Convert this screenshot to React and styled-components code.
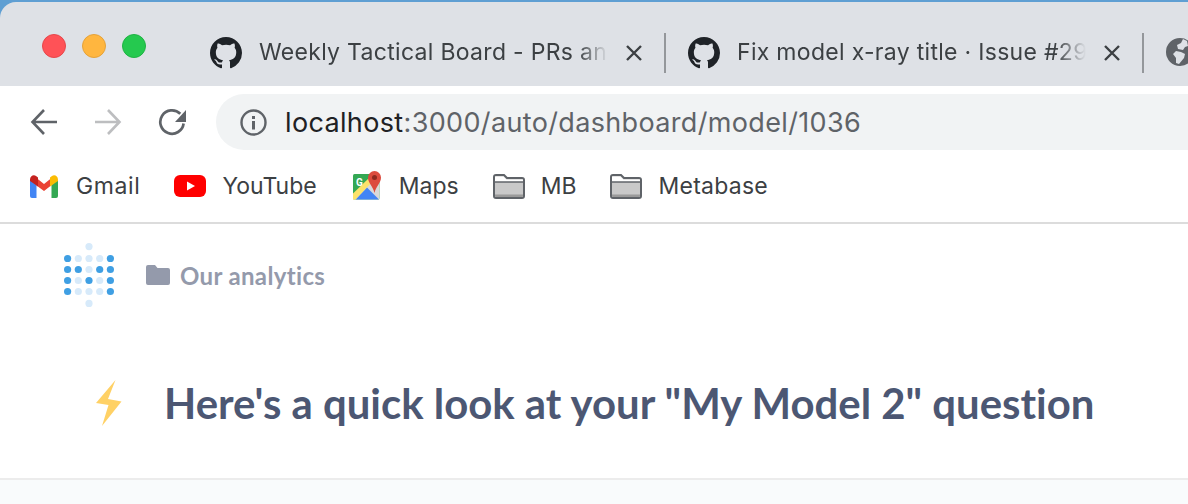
import React from "react";
import styled, { createGlobalStyle } from "styled-components";

const GITHUB_PATH =
  "M8 0C3.58 0 0 3.58 0 8c0 3.54 2.29 6.53 5.47 7.59.4.07.55-.17.55-.38 0-.19-.01-.82-.01-1.49-2.01.37-2.53-.49-2.69-.94-.09-.23-.48-.94-.82-1.13-.28-.15-.68-.52-.01-.53.63-.01 1.08.58 1.23.82.72 1.21 1.87.87 2.33.66.07-.52.28-.87.51-1.07-1.78-.2-3.64-.89-3.64-3.95 0-.87.31-1.59.82-2.15-.08-.2-.36-1.02.08-2.12 0 0 .67-.21 2.2.82.64-.18 1.32-.27 2-.27.68 0 1.36.09 2 .27 1.53-1.04 2.2-.82 2.2-.82.44 1.1.16 1.92.08 2.12.51.56.82 1.27.82 2.15 0 3.07-1.87 3.75-3.65 3.95.29.25.54.73.54 1.48 0 1.07-.01 1.93-.01 2.2 0 .21.15.46.55.38A8.013 8.013 0 0016 8c0-4.42-3.58-8-8-8z";

const LOGO_ROWS = ["DLLLD", "DDLDD", "DLDLD", "DLLLD"];

const GlobalStyle = createGlobalStyle`
  html, body {
    margin: 0;
    padding: 0;
    background: #f9fbfc;
    overflow: hidden;
  }
`;

const GithubIcon = () => (
  <svg width="32" height="32" viewBox="0 0 16 16">
    <path fill="#1f2328" fillRule="evenodd" d={GITHUB_PATH} />
  </svg>
);

const CloseIcon = () => (
  <svg width="18" height="18" viewBox="0 0 18 18">
    <path d="M2 2l14 14M16 2L2 16" stroke="#3c4043" strokeWidth="2.4" fill="none" />
  </svg>
);

const GlobeIcon = () => (
  <svg width="28" height="28" viewBox="0 0 28 28">
    <circle cx="14" cy="14" r="14" fill="#5f6368" />
    <path
      d="M17 1l-2 4-4 2 1 4 5 1 2-3 3-1-1-5zM15 14l-5-1-3 3 3 4v5l3 1 5-6 1-4zM24 14l3 1-3 7-2-1v-4z"
      fill="#dee1e6"
    />
  </svg>
);

const ArrowIcon = ({ dir, color }) => (
  <svg width="28" height="28" viewBox="0 0 28 28">
    <path
      d={dir === "left" ? "M27 14H3M14 2L2.500 14 14 26" : "M1 14h24M14 2l11.500 12L14 26"}
      stroke={color}
      strokeWidth="2.600"
      fill="none"
    />
  </svg>
);

const ReloadIcon = () => (
  <svg width="28" height="28" viewBox="0 0 28 28">
    <path d="M22.300 5.800A11.700 11.700 0 1 0 25.600 15.500" stroke="#5f6368" strokeWidth="2.700" fill="none" />
    <path d="M28 2v12H17z" fill="#5f6368" />
  </svg>
);

const InfoIcon = () => (
  <svg width="27" height="27" viewBox="0 0 27 27">
    <circle cx="13.500" cy="13.500" r="12" stroke="#5f6368" strokeWidth="2.400" fill="none" />
    <rect x="12" y="7" width="3" height="3" fill="#5f6368" />
    <rect x="12" y="12" width="3" height="8.500" fill="#5f6368" />
  </svg>
);

const GmailIcon = () => (
  <svg width="28" height="23" viewBox="0 0 28 23">
    <path d="M0 5h6.500v18H2a2 2 0 0 1-2-2z" fill="#4285f4" />
    <path d="M21.500 5H28v16a2 2 0 0 1-2 2h-4.500z" fill="#34a853" />
    <path d="M6.500 3L14 9l7.500-6L23 9l-9 7-7.500-5.500z" fill="#ea4335" />
    <path d="M0 4.500C0 1 3.600-.8 6 1l2 1.600V11.500L0 6z" fill="#c5221f" />
    <path d="M28 4.500C28 1 24.400-.8 22 1l-2 1.600v8.900L28 6z" fill="#fbbc04" />
  </svg>
);

const YoutubeIcon = () => (
  <svg width="32" height="22" viewBox="0 0 32 22">
    <rect width="32" height="22" rx="6" fill="#ff0000" />
    <path d="M13 6.500l8 4.500-8 4.500z" fill="#fff" />
  </svg>
);

const MapsIcon = () => (
  <svg width="32" height="30" viewBox="0 0 32 30">
    <path d="M2 4.500A1.500 1.500 0 0 1 3.500 3H27a1.500 1.500 0 0 1 1.500 1.500V27a1.500 1.500 0 0 1-1.500 1.500H3.500A1.500 1.500 0 0 1 2 27z" fill="#34a853" />
    <path d="M2 28.500V24L23 3h5.500v25.500z" fill="#d9d9d9" />
    <path d="M4.500 28.500L16 16.500l12 12z" fill="#4285f4" />
    <path d="M2 28.500v-6L18 7l4.500 2.500L4.500 28.500z" fill="#fbe26b" />
    <text x="5" y="15" fontFamily="Roboto, sans-serif" fontSize="10" fontWeight="700" fill="#fff">
      G
    </text>
    <path d="M23.500 0a6.500 6.500 0 0 1 6.500 6.500C30 12 25 15 23.500 22 22 15 17 12 17 6.500A6.500 6.500 0 0 1 23.500 0z" fill="#dc4b3e" />
    <circle cx="23.500" cy="6.500" r="2.500" fill="#8e2a20" />
  </svg>
);

const FolderIcon = () => (
  <svg width="32" height="25" viewBox="0 0 32 25">
    <path d="M1 3a2 2 0 0 1 2-2h8l3 3h15a2 2 0 0 1 2 2v16a2 2 0 0 1-2 2H3a2 2 0 0 1-2-2z" fill="#c9c9c9" stroke="#5f6368" strokeWidth="2" />
    <path d="M2 2.500h8.500l3 3H30V8H2z" fill="#fff" />
    <path d="M2 8h28" stroke="#5f6368" strokeWidth="1.500" />
    <path d="M2 20.500h28V22a1 1 0 0 1-1 1H3a1 1 0 0 1-1-1z" fill="#9a9a9a" />
  </svg>
);

const LogoIcon = () => (
  <svg width="50" height="64" viewBox="0 0 50 64">
    <circle cx="25" cy="3.600" r="3.600" fill="#d7eafa" />
    <circle cx="25" cy="60.400" r="3.600" fill="#d7eafa" />
    {LOGO_ROWS.map((row, y) =>
      row.split("").map((cell, x) => (
        <circle
          key={`${x}-${y}`}
          cx={3.600 + x * 10.700}
          cy={15.500 + y * 11}
          r="3.600"
          fill={cell === "D" ? "#3f9fe3" : "#d7eafa"}
        />
      ))
    )}
  </svg>
);

const SmallFolderIcon = () => (
  <svg width="24" height="20" viewBox="0 0 24 20">
    <path d="M0 2a2 2 0 0 1 2-2h7l2.500 3H22a2 2 0 0 1 2 2v13a2 2 0 0 1-2 2H2a2 2 0 0 1-2-2z" fill="#949aab" />
  </svg>
);

const BoltIcon = () => (
  <svg width="26" height="46" viewBox="0 0 26 46">
    <path d="M19.500 0L0 23l12.500 2L6 46l19.500-24.500L12 19z" fill="#ffd165" />
  </svg>
);

const App = () => (
  <Page>
    <GlobalStyle />
    <TabStrip>
      <TrafficLights>
        <Light color="#ff5257" edge="#e6474b" />
        <Light color="#ffb63f" edge="#e5a239" />
        <Light color="#25c94f" edge="#1fb344" />
      </TrafficLights>
      <Tab>
        <GithubIcon />
        <TabTitle>Weekly Tactical Board - PRs and Issues</TabTitle>
        <TabClose>
          <CloseIcon />
        </TabClose>
      </Tab>
      <Tab>
        <GithubIcon />
        <TabTitle>Fix model x-ray title · Issue #29517</TabTitle>
        <TabClose>
          <CloseIcon />
        </TabClose>
      </Tab>
      <LastTab>
        <GlobeIcon />
      </LastTab>
    </TabStrip>
    <Toolbar>
      <NavButtons>
        <ArrowIcon dir="left" color="#5f6368" />
        <ArrowIcon dir="right" color="#bdbec0" />
        <ReloadIcon />
      </NavButtons>
      <Omnibox>
        <InfoIcon />
        <Url>
          <UrlHost>localhost</UrlHost>:3000/auto/dashboard/model/1036
        </Url>
      </Omnibox>
    </Toolbar>
    <Bookmarks>
      <Bookmark>
        <BookmarkIcon>
          <GmailIcon />
        </BookmarkIcon>
        <BookmarkLabel $spacing={0.6}>Gmail</BookmarkLabel>
      </Bookmark>
      <Bookmark>
        <BookmarkIcon>
          <YoutubeIcon />
        </BookmarkIcon>
        <BookmarkLabel>YouTube</BookmarkLabel>
      </Bookmark>
      <Bookmark>
        <BookmarkIcon>
          <MapsIcon />
        </BookmarkIcon>
        <BookmarkLabel>Maps</BookmarkLabel>
      </Bookmark>
      <Bookmark>
        <BookmarkIcon>
          <FolderIcon />
        </BookmarkIcon>
        <BookmarkLabel>MB</BookmarkLabel>
      </Bookmark>
      <Bookmark>
        <BookmarkIcon>
          <FolderIcon />
        </BookmarkIcon>
        <BookmarkLabel $spacing={0.25}>Metabase</BookmarkLabel>
      </Bookmark>
    </Bookmarks>
    <Content>
      <Breadcrumbs>
        <LogoIcon />
        <Crumb>
          <SmallFolderIcon />
          <CrumbLabel>Our analytics</CrumbLabel>
        </Crumb>
      </Breadcrumbs>
      <Heading>
        <BoltIcon />
        <Title>Here's a quick look at your "My Model 2" question</Title>
      </Heading>
    </Content>
    <Footer />
  </Page>
);

const Page = styled.div`
  width: 1188px;
  height: 504px;
  display: flex;
  flex-direction: column;
  overflow: hidden;
  background: linear-gradient(#5f9fd3 0, #5f9fd3 20px, #fff 20px);
`;

const TabStrip = styled.div`
  margin-top: 2px;
  height: 84px;
  flex: none;
  display: flex;
  overflow: hidden;
  border-top-left-radius: 16px;
  background: #dee1e6;
`;

const TrafficLights = styled.div`
  width: 188px;
  flex: none;
  box-sizing: border-box;
  padding: 0 0 0 42px;
  margin-top: 32px;
  display: flex;
  gap: 16px;
`;

const Light = styled.span`
  width: 24px;
  height: 24px;
  box-sizing: border-box;
  border-radius: 50%;
  background: ${(p) => p.color};
  border: 1px solid ${(p) => p.edge};
`;

const Tab = styled.div`
  width: 478px;
  flex: none;
  box-sizing: border-box;
  height: 40px;
  margin-top: 31px;
  padding: 0 21px 0 22px;
  display: flex;
  align-items: center;
  border-right: 2px solid #94979b;
`;

const LastTab = styled.div`
  flex: none;
  margin-top: 36px;
  padding-left: 22px;
`;

const TabTitle = styled.span`
  flex: 1;
  min-width: 0;
  margin: 0 0 2px 17px;
  overflow: hidden;
  white-space: nowrap;
  font-family: Inter, sans-serif;
  font-size: 23px;
  line-height: 38px;
  letter-spacing: 0.3px;
  color: #3c4043;
  mask-image: linear-gradient(to right, #000 calc(100% - 30px), transparent 100%);
`;

const TabClose = styled.span`
  width: 18px;
  height: 18px;
  flex: none;
  margin-left: 17px;
`;

const Toolbar = styled.div`
  height: 74px;
  flex: none;
  box-sizing: border-box;
  padding-top: 8px;
  display: flex;
  background: #fff;
`;

const NavButtons = styled.div`
  width: 216px;
  height: 56px;
  flex: none;
  box-sizing: border-box;
  padding-left: 30px;
  display: flex;
  align-items: center;
  gap: 36px;
`;

const Omnibox = styled.div`
  flex: 1;
  height: 56px;
  padding-left: 24px;
  display: flex;
  align-items: center;
  gap: 18px;
  border-radius: 28px 0 0 28px;
  background: #f1f3f4;
`;

const Url = styled.div`
  font-family: Inter, sans-serif;
  font-size: 27px;
  letter-spacing: 0.35px;
  color: #5f6368;
`;

const UrlHost = styled.span`
  color: #202124;
`;

const Bookmarks = styled.div`
  height: 64px;
  flex: none;
  box-sizing: border-box;
  padding: 0 0 10px 28px;
  display: flex;
  align-items: center;
  gap: 34px;
  border-bottom: 2px solid #dcdcdc;
  background: #fff;
`;

const Bookmark = styled.div`
  display: flex;
  align-items: center;
  gap: 16px;
`;

const BookmarkIcon = styled.span`
  width: 32px;
  height: 30px;
  flex: none;
  display: flex;
  align-items: center;
  justify-content: center;
`;

const BookmarkLabel = styled.span`
  font-family: Inter, sans-serif;
  font-size: 23px;
  letter-spacing: ${(p) => p.$spacing || 0}px;
  color: #3c4043;
`;

const Content = styled.div`
  height: 254px;
  flex: none;
  box-sizing: border-box;
  padding-top: 19px;
  background: #fff;
`;

const Breadcrumbs = styled.div`
  padding-left: 64px;
  display: flex;
  align-items: center;
  gap: 32px;
`;

const Crumb = styled.div`
  display: flex;
  align-items: center;
  gap: 10px;
`;

const CrumbLabel = styled.span`
  font-family: Lato, sans-serif;
  font-size: 24px;
  font-weight: 700;
  font-variant-ligatures: none;
  letter-spacing: 0.35px;
  color: #949aab;
`;

const Heading = styled.div`
  margin-top: 71px;
  padding-left: 96px;
  display: flex;
  align-items: center;
  gap: 42px;
`;

const Title = styled.h1`
  margin: 0;
  padding-top: 1px;
  font-family: Lato, sans-serif;
  font-size: 41.900px;
  font-weight: 700;
  font-variant-ligatures: none;
  line-height: 48px;
  white-space: nowrap;
  color: #4c5773;
`;

const Footer = styled.div`
  flex: 1;
  border-top: 2px solid #ececec;
  background: #f9fbfc;
`;

export default App;
